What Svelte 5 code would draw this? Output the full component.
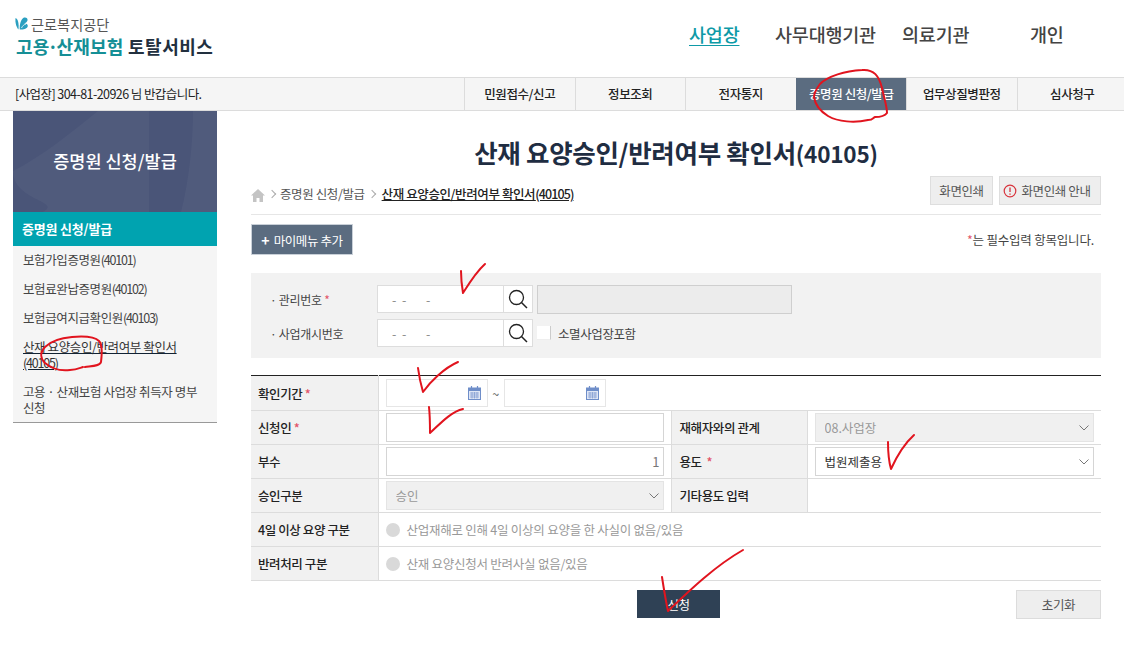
<script>
  const topNav = [
    { label: '사업장', on: true },
    { label: '사무대행기관' },
    { label: '의료기관' },
    { label: '개인' },
  ];
  const tabs = ['민원접수/신고', '정보조회', '전자통지', '증명원 신청/발급', '업무상질병판정', '심사청구'];
  const sideItems = [
    { label: '보험가입증명원', code: '(40101)' },
    { label: '보험료완납증명원', code: '(40102)' },
    { label: '보험급여지급확인원', code: '(40103)' },
    { label: '산재 요양승인/반려여부 확인서', code: '(40105)', on: true },
    { label: '고용 · 산재보험 사업장 취득자 명부 신청' },
  ];
  // red pen marks drawn over the page
  const marks = [
    'M820 84C828 76 845 71 862 70C874 69 879 76 882 88C884 98 887 106 887 113C884 117 878 117 875 117C872 118 874 120 868 120C855 123 838 122 828 116C820 111 815 104 814 97C814 92 817 88 820 84',
    'M85 367C92 366 100 366 101 362C102 354 102 344 99 341C94 336 84 336 72 337C60 338 50 342 45 347C40 352 40 358 45 363C52 369 62 371 70 370C76 370 80 368 83 367',
    'M461 271C461 279 462 287 463 293C468 285 476 272 485 264',
    'M418 368C419 376 421 385 423 392C430 382 444 368 458 362',
    'M429 407C430 416 430 425 430 433C438 426 450 412 463 409',
    'M888 442C888 452 889 462 891 469C896 458 904 444 914 435',
    'M662 577C664 590 666 602 668 611C690 590 715 566 743 550',
  ];
</script>

<div class="page">
  <header class="top">
    <div class="logo">
      <div class="logo-sub">
        <svg viewBox="0 0 13 13" width="13" height="13" aria-hidden="true">
          <path d="M0.500 1C3 2 4 6 3.500 12.500C1.500 10.500 0 6 0.500 1Z" fill="#2a9fc0" />
          <path d="M4.800 12.500C4.500 7 6 2 9 0.500C11 0 13 1 12.500 3.500C12 5 10.500 6 9 6.500C11 6.300 13 7 12.800 9C12.500 11.500 9 13 4.800 12.500Z" fill="#2a9fc0" />
          <path d="M6.500 11C7.500 8.800 9 7.500 11 7" stroke="#fff" stroke-width="0.800" fill="none" />
        </svg>
        <span>근로복지공단</span>
      </div>
      <div class="logo-main"><span class="teal">고용<span class="dot">·</span>산재보험</span> 토탈서비스</div>
    </div>
    <nav class="top-nav">
      {#each topNav as n}
        <a href="#top" class:on={n.on}>{n.label}</a>
      {/each}
    </nav>
  </header>

  <div class="bar">
    <p class="hello">[사업장] 304-81-20926 님 반갑습니다.</p>
    <ul class="tabs">
      {#each tabs as t, i}
        <li class:on={i === 3}>{t}</li>
      {/each}
    </ul>
  </div>

  <div class="body">
    <aside class="side">
      <div class="side-head">
        <svg class="side-deco" viewBox="0 0 204 101" preserveAspectRatio="none" aria-hidden="true">
          <path d="M0 60C30 45 60 20 85 0H136V101H30C50 90 0 90 0 60Z" fill="#fff" opacity="0.035" />
          <path d="M180 0H204V101H168C176 70 180 30 180 0Z" fill="#fff" opacity="0.035" />
        </svg>
        <span>증명원 신청/발급</span>
      </div>
      <div class="side-title">증명원 신청/발급</div>
      <ul class="side-list">
        {#each sideItems as s}
          <li><a href="#top" class:on={s.on}>{s.label}{#if s.code}<span class="code">{s.code}</span>{/if}</a></li>
        {/each}
      </ul>
    </aside>

    <main class="main">
      <h1>산재 요양승인/반려여부 확인서<span class="h-code">(40105)</span></h1>

      <div class="crumbs">
        <div class="path">
          <svg class="home" viewBox="0 0 14 13" width="14" height="13" aria-hidden="true">
            <path d="M7 0L14 6.500H12V13H8.500V9H5.500V13H2V6.500H0Z" fill="#c4c4c4" />
          </svg>
          <i class="sep"></i>
          <span>증명원 신청/발급</span>
          <i class="sep"></i>
          <strong>산재 요양승인/반려여부 확인서<span class="code wide">(40105)</span></strong>
        </div>
        <div class="print">
          <button class="ghost">화면인쇄</button>
          <button class="ghost alert">
            <svg viewBox="0 0 14 14" width="14" height="14" aria-hidden="true">
              <circle cx="7" cy="7" r="5.800" fill="none" stroke="#d8333c" stroke-width="1.200" />
              <path d="M7 3.500V8M7 9.500V10.800" stroke="#d8333c" stroke-width="1.300" />
            </svg>
            화면인쇄 안내
          </button>
        </div>
      </div>

      <div class="tools">
        <button class="add"><b>+</b> 마이메뉴 추가</button>
        <p class="note"><em>*</em>는 필수입력 항목입니다.</p>
      </div>

      <section class="search">
        <div class="s-row">
          <label class="s-label" for="mgmt">· 관리번호 <em>*</em></label>
          <div class="s-input">
            <input id="mgmt" value="-  -       -" />
            <button aria-label="검색">
              <svg viewBox="0 0 20 20" width="20" height="20"><circle cx="8.500" cy="8.500" r="7" fill="none" stroke="#222" stroke-width="1.300" /><path d="M13.500 13.500L19 19" stroke="#222" stroke-width="1.500" /></svg>
            </button>
          </div>
          <div class="s-name"></div>
        </div>
        <div class="s-row">
          <label class="s-label" for="biz">· 사업개시번호</label>
          <div class="s-input">
            <input id="biz" value="-  -       -" />
            <button aria-label="검색">
              <svg viewBox="0 0 20 20" width="20" height="20"><circle cx="8.500" cy="8.500" r="7" fill="none" stroke="#222" stroke-width="1.300" /><path d="M13.500 13.500L19 19" stroke="#222" stroke-width="1.500" /></svg>
            </button>
          </div>
          <label class="s-check"><i class="box"></i>소멸사업장포함</label>
        </div>
      </section>

      <table class="form">
        <colgroup><col class="c1" /><col class="c2" /><col class="c3" /><col /></colgroup>
        <tbody>
          <tr class="first">
            <th>확인기간 <em>*</em></th>
            <td colspan="3">
              <div class="dates">
                {#each [0, 1] as d}
                  {#if d}<span class="tilde">~</span>{/if}
                  <div class="date">
                    <svg viewBox="0 0 13 14" width="13" height="14" aria-hidden="true">
                      <rect x="0.500" y="2" width="12" height="11.500" fill="#dfe6f5" stroke="#6f8ec9" />
                      <rect x="0.500" y="2" width="12" height="3" fill="#6f8ec9" />
                      <path d="M3.500 0V3M9.500 0V3" stroke="#6f8ec9" stroke-width="1.200" />
                      <path d="M2 7H11M2 9H11M2 11H11M4 6V12.500M6.500 6V12.500M9 6V12.500" stroke="#6f8ec9" stroke-width="0.600" />
                    </svg>
                  </div>
                {/each}
              </div>
            </td>
          </tr>
          <tr>
            <th>신청인 <em>*</em></th>
            <td><input class="field" /></td>
            <th>재해자와의 관계</th>
            <td>
              <div class="sel">
                <select disabled><option>08.사업장</option></select>
                <svg viewBox="0 0 10 6" width="10" height="6"><path d="M0.500 0.500L5 5L9.500 0.500" fill="none" stroke="#777" /></svg>
              </div>
            </td>
          </tr>
          <tr>
            <th>부수</th>
            <td><input class="field num" value="1" /></td>
            <th>용도 &nbsp;<em>*</em></th>
            <td>
              <div class="sel">
                <select><option>법원제출용</option></select>
                <svg viewBox="0 0 10 6" width="10" height="6"><path d="M0.500 0.500L5 5L9.500 0.500" fill="none" stroke="#777" /></svg>
              </div>
            </td>
          </tr>
          <tr>
            <th>승인구분</th>
            <td>
              <div class="sel">
                <select disabled><option>승인</option></select>
                <svg viewBox="0 0 10 6" width="10" height="6"><path d="M0.500 0.500L5 5L9.500 0.500" fill="none" stroke="#777" /></svg>
              </div>
            </td>
            <th>기타용도 입력</th>
            <td></td>
          </tr>
          <tr>
            <th>4일 이상 요양 구분</th>
            <td colspan="3"><span class="radio"><i></i>산업재해로 인해 4일 이상의 요양을 한 사실이 없음/있음</span></td>
          </tr>
          <tr>
            <th>반려처리 구분</th>
            <td colspan="3"><span class="radio"><i></i>산재 요양신청서 반려사실 없음/있음</span></td>
          </tr>
        </tbody>
      </table>

      <div class="actions">
        <button class="submit">신청</button>
        <button class="reset">초기화</button>
      </div>
    </main>
  </div>

  <svg class="pen" viewBox="0 0 1124 671" width="1124" height="671" aria-hidden="true">
    {#each marks as d}
      <path {d} />
    {/each}
  </svg>
</div>

<style>
  :global(body) {
    margin: 0;
    background: #fff;
    overflow: hidden;
  }
  .page {
    position: relative;
    width: 1124px;
    height: 671px;
    overflow: hidden;
    font-family: "Noto Sans CJK KR", "Noto Sans", sans-serif;
    font-size: 12.500px;
    letter-spacing: -0.400px;
    color: #333;
  }
  p, ul, h1 { margin: 0; padding: 0; }
  ul { list-style: none; }
  a { color: inherit; text-decoration: none; }
  em { color: #e2566a; font-style: normal; }
  button { font: inherit; letter-spacing: inherit; cursor: pointer; }
  .code { letter-spacing: -1.200px; }
  .code.wide { letter-spacing: -0.900px; }

  /* Header */
  .top {
    height: 77px;
    display: flex;
    justify-content: space-between;
  }
  .logo { padding: 14px 0 0 16px; }
  .logo-sub {
    display: flex;
    align-items: center;
    gap: 3px;
    height: 19px;
    margin-left: -1px;
    font-size: 14.200px;
    letter-spacing: 0;
    color: #555;
  }
  .logo-main {
    margin-top: 1px;
    font-size: 18px;
    line-height: 24px;
    font-weight: 700;
    letter-spacing: 0.500px;
    color: #22303f;
  }
  .teal { color: #158f96; letter-spacing: 0.200px; }
  .dot { margin: 0 -2px; }
  .top-nav {
    display: grid;
    grid-template-columns: 86px 127px 128px 60px;
    align-items: start;
    margin-right: 34px;
    padding-top: 20px;
    font-size: 18.500px;
    line-height: 28px;
    letter-spacing: -0.200px;
    font-weight: 500;
    color: #444;
  }
  .top-nav a.on {
    color: #0e9aa7;
    text-decoration: underline;
    text-underline-offset: 3px;
  }

  /* Tab bar */
  .bar {
    height: 32px;
    display: flex;
    justify-content: space-between;
    background: #f5f5f5;
    border-top: 1px solid #dcdcdc;
    border-bottom: 1px solid #dcdcdc;
  }
  .hello {
    padding-left: 15px;
    line-height: 31px;
    letter-spacing: -0.570px;
    color: #222;
  }
  .tabs {
    display: grid;
    grid-template-columns: repeat(6, 110.500px);
    width: 660px;
    text-align: center;
    line-height: 32px;
    color: #222;
    font-weight: 500;
  }
  .tabs li { border-left: 1px solid #dcdcdc; height: 32px; }
  .tabs li.on { background: #5b6c80; color: #fff; border-left-color: #5b6c80; }

  /* Layout */
  .body { display: flex; align-items: flex-start; }

  /* Sidebar */
  .side {
    width: 204px;
    margin-left: 13px;
    flex: none;
    background: #f5f5f5;
    border-bottom: 1px solid #999;
  }
  .side-head {
    position: relative;
    height: 101px;
    box-sizing: border-box;
    padding-bottom: 2px;
    display: flex;
    align-items: center;
    justify-content: center;
    background: #4a5578;
    color: #fff;
    font-size: 17.500px;
    font-weight: 500;
    letter-spacing: 0;
  }
  .side-deco { position: absolute; inset: 0; width: 100%; height: 100%; }
  .side-head span { position: relative; }
  .side-title {
    height: 34px;
    padding-left: 9px;
    line-height: 34px;
    background: #00a3b0;
    color: #fff;
    font-size: 13px;
    font-weight: 700;
    letter-spacing: -0.200px;
  }
  .side-list { padding: 0 10px; color: #444; word-break: keep-all; }
  .side-list li { line-height: 16px; padding: 6px 0 7px; }
  .side-list li:last-child { padding-bottom: 6px; }
  .side-list a.on {
    color: #333;
    text-decoration: underline;
    text-decoration-color: #123;
  }

  /* Main */
  .main {
    width: 850px;
    margin-left: 34px;
    flex: none;
  }
  h1 {
    margin-top: 24px;
    font-size: 25.500px;
    line-height: 34px;
    font-weight: 700;
    letter-spacing: -0.300px;
    text-align: center;
    color: #1f2d42;
  }
  .h-code { font-size: 22.500px; letter-spacing: -0.200px; }
  .crumbs {
    margin-top: 6px;
    height: 38px;
    display: flex;
    justify-content: space-between;
    align-items: flex-start;
    border-bottom: 1px solid #e6e6e6;
  }
  .path {
    display: flex;
    align-items: center;
    gap: 4px;
    padding-top: 8px;
    color: #555;
  }
  .home { margin-top: 4px; }
  .path strong {
    margin-left: 2px;
    font-weight: 500;
    color: #222;
    text-decoration: underline;
  }
  .sep {
    width: 5px;
    height: 5px;
    margin-right: 1px;
    border-top: 1px solid #aaa;
    border-right: 1px solid #aaa;
    transform: rotate(45deg);
  }
  .print { display: flex; gap: 6px; }
  .ghost {
    width: 63px;
    height: 29px;
    padding: 0;
    display: flex;
    align-items: center;
    justify-content: center;
    gap: 4px;
    background: #eee;
    border: 1px solid #dedede;
    color: #555;
  }
  .alert { width: 102px; padding-right: 6px; }

  .tools {
    margin-top: 9px;
    display: flex;
    justify-content: space-between;
    align-items: center;
    height: 31px;
  }
  .add {
    width: 102px;
    height: 31px;
    padding: 0;
    background: #5b6c80;
    border: 1px solid #c9d0d8;
    color: #fff;
  }
  .add b { font-size: 14px; margin-right: 2px; }
  .note { padding-right: 7px; letter-spacing: -0.200px; color: #444; }

  /* Search box */
  .search {
    margin-top: 18px;
    height: 85px;
    box-sizing: border-box;
    padding-top: 12px;
    background: #f2f2f2;
  }
  .s-row {
    display: flex;
    align-items: center;
    height: 28px;
    margin-bottom: 6px;
  }
  .s-label {
    width: 126px;
    flex: none;
    box-sizing: border-box;
    padding-left: 19px;
    font-size: 12px;
    letter-spacing: -0.300px;
    color: #444;
  }
  .s-input {
    width: 156px;
    height: 28px;
    display: flex;
    box-sizing: border-box;
    background: #fff;
    border: 1px solid #ddd;
  }
  .s-input input {
    flex: 1;
    min-width: 0;
    border: 0;
    outline: 0;
    padding: 0 0 0 14px;
    background: none;
    font: inherit;
    color: #888;
    white-space: pre;
  }
  .s-input button {
    width: 29px;
    padding: 0;
    display: flex;
    align-items: center;
    justify-content: center;
    background: none;
    border: 0;
    border-left: 1px solid #ddd;
  }
  .s-name {
    width: 255px;
    height: 29px;
    margin-left: 4px;
    box-sizing: border-box;
    background: #ececec;
    border: 1px solid #cfcfcf;
  }
  .s-check {
    display: flex;
    align-items: center;
    margin-left: 4px;
    color: #444;
  }
  .box {
    width: 13px;
    height: 13px;
    margin-right: 7px;
    background: #fff;
    border-right: 1px solid #ccc;
    border-bottom: 1px solid #eee;
  }

  /* Form table */
  .form {
    width: 850px;
    margin-top: 17px;
    border-collapse: collapse;
    table-layout: fixed;
    border-top: 1px solid #222;
  }
  .c1 { width: 127px; }
  .c2 { width: 293px; }
  .c3 { width: 136px; }
  .form tr { height: 34px; border-bottom: 1px solid #dcdcdc; }
  .form tr.first { height: 35px; }
  .form th {
    padding: 0 0 0 7px;
    text-align: left;
    background: #f1f1f1;
    border-right: 1px solid #dcdcdc;
    font-weight: 500;
    color: #222;
  }
  .form td { padding: 0 7px; }
  .form tr td + th { padding-left: 8px; border-left: 1px solid #dcdcdc; }
  .dates { display: flex; align-items: center; }
  .date {
    width: 102px;
    height: 28px;
    box-sizing: border-box;
    display: flex;
    align-items: center;
    justify-content: flex-end;
    padding-right: 6px;
    border: 1px solid #e6e6e6;
  }
  .tilde { width: 16px; text-align: center; color: #555; }
  .field {
    display: block;
    width: 100%;
    height: 29px;
    box-sizing: border-box;
    padding: 0 3px;
    border: 1px solid #d5d5d5;
    outline: 0;
    font: inherit;
    color: #777;
  }
  .num { text-align: right; font-size: 13px; }
  .sel { position: relative; height: 29px; }
  .sel select {
    width: 100%;
    height: 29px;
    box-sizing: border-box;
    padding: 0 9px;
    appearance: none;
    border: 1px solid #d5d5d5;
    border-radius: 0;
    outline: 0;
    background: #fff;
    font: inherit;
    color: #333;
    opacity: 1;
  }
  .sel select:disabled { background: #f0f0f0; color: #999; border-color: #e4e4e4; }
  .sel svg { position: absolute; right: 5px; top: 12px; }
  .radio {
    display: flex;
    align-items: center;
    gap: 7px;
    letter-spacing: -0.250px;
    color: #999;
  }
  .radio i {
    width: 14px;
    height: 14px;
    border-radius: 50%;
    background: #d9d9d9;
  }

  .actions {
    margin-top: 9px;
    height: 29px;
    display: flex;
    justify-content: space-between;
    padding-left: 386px;
  }
  .submit {
    width: 83px;
    height: 28px;
    padding: 0;
    border: 0;
    background: #2f4155;
    color: #fff;
  }
  .reset {
    width: 85px;
    height: 29px;
    padding: 0;
    background: #eee;
    border: 1px solid #dcdcdc;
    color: #555;
  }

  /* Red pen annotations */
  .pen {
    position: absolute;
    left: 0;
    top: 0;
    pointer-events: none;
  }
  .pen path {
    fill: none;
    stroke: #e1141e;
    stroke-width: 2;
    stroke-linecap: round;
    stroke-linejoin: round;
  }
</style>
